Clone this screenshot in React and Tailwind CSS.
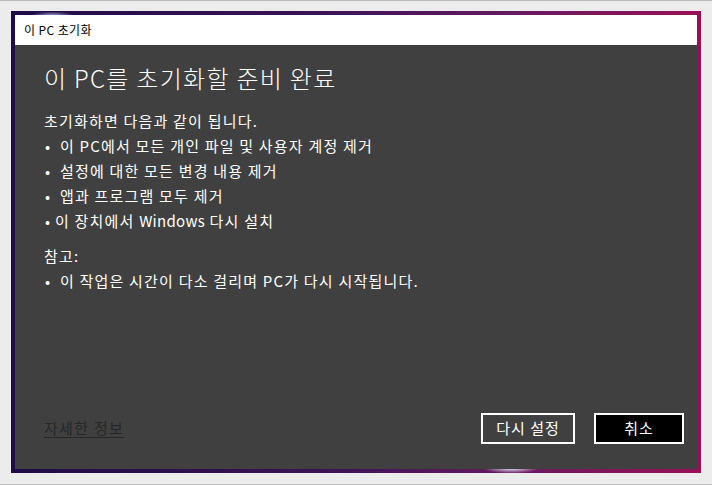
import React from "react";

const font = { fontFamily: '"Noto Sans CJK KR", "Noto Sans", sans-serif' };

export default function App() {
  return (
    <div
      className="w-[712px] h-[485px] bg-[#ececec] border-t border-b border-[#bdbdbd] overflow-hidden"
      style={font}
    >
      <div className="ml-[11px] mt-[10px] w-[690px] h-[462px] p-[4px] bg-[radial-gradient(ellipse_28px_5px_at_72.5%_99%,rgba(235,240,255,0.95),transparent),radial-gradient(ellipse_22px_4px_at_6%_1%,rgba(200,210,255,0.8),transparent),linear-gradient(90deg,#1f0b48,#3a1356_45%,#6a1a60_75%,#9a0f55)]">
        <div className="w-full h-full flex flex-col">
          <div className="h-[30px] bg-white pl-[9px] flex items-center text-[12px] tracking-[0.4px] text-black">
            이 PC 초기화
          </div>
          <div className="flex-1 bg-[#404040] pl-[29px] pr-[13px] flex flex-col text-white">
            <div className="pt-[17px] text-[24px] leading-[32px] font-light tracking-[1.3px]">
              이 PC를 초기화할 준비 완료
            </div>
            <div className="mt-[14px] text-[15px] leading-[25px] tracking-[1.2px]">
              <div>초기화하면 다음과 같이 됩니다.</div>
              <div className="flex"><span className="w-[16px] pl-[1px]">•</span><span>이 PC에서 모든 개인 파일 및 사용자 계정 제거</span></div>
              <div className="flex"><span className="w-[16px] pl-[1px]">•</span><span>설정에 대한 모든 변경 내용 제거</span></div>
              <div className="flex"><span className="w-[16px] pl-[1px]">•</span><span>앱과 프로그램 모두 제거</span></div>
              <div className="flex"><span className="w-[11px] pl-[1px]">•</span><span>이 장치에서 <span className="tracking-[0.3px]">Windows</span> 다시 설치</span></div>
              <div className="mt-[10px]">참고:</div>
              <div className="flex"><span className="w-[16px] pl-[1px]">•</span><span>이 작업은 시간이 다소 걸리며 PC가 다시 시작됩니다.</span></div>
            </div>
            <div className="mt-auto mb-[25px] flex items-center">
              <span className="text-[15px] tracking-[1.3px] text-[#262626] underline underline-offset-[3px]">자세한 정보</span>
              <div className="ml-auto flex gap-[19px]">
                <button className="w-[94px] h-[31px] border-2 border-white text-[15px] tracking-[1px] text-white bg-transparent flex items-center justify-center">
                  다시 설정
                </button>
                <button className="w-[90px] h-[31px] border-2 border-white text-[15px] tracking-[1px] text-white bg-black flex items-center justify-center">
                  취소
                </button>
              </div>
            </div>
          </div>
        </div>
      </div>
    </div>
  );
}
